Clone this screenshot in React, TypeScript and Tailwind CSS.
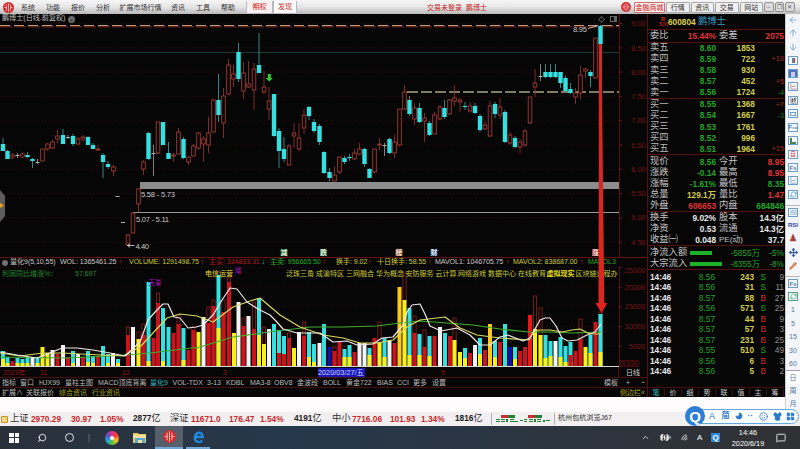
import {
  ArrowDown,
  ArrowLeft,
  ArrowUp,
  BatteryCharging,
  ChartCandlestick,
  ChartLine,
  ChevronUp,
  LayoutGrid,
  MessageSquare,
  Moon,
  Move,
  Pencil,
  RefreshCw,
  Search,
  Shirt,
  Smile,
  Waves,
  Wifi,
} from "lucide-react";
import { clsx } from "clsx";

// x, high, low, body top, body bottom, kind (u = up, d = down, c = grey cross)
type Candle = [number, number, number, number, number, "u" | "d" | "c"];

const candles: Candle[] = [
  [3, 138, 151, 144, 151, "d"],
  [7.5, 150, 159, 151, 159, "d"],
  [12.5, 153, 159, 155, 157, "u"],
  [17.5, 153, 158, 155, 156, "c"],
  [22.5, 153, 158, 154, 157, "u"],
  [27.5, 152, 158, 155, 157, "d"],
  [32.5, 158, 168, 159, 161, "d"],
  [37.5, 159, 164, 162, 163, "c"],
  [42.5, 149, 161, 149, 161, "u"],
  [47.5, 143, 151, 144, 149, "u"],
  [52.5, 140, 149, 142, 148, "u"],
  [57.5, 130, 143, 136, 139, "u"],
  [63, 129, 144, 135, 144, "d"],
  [68, 135, 139, 137, 138, "c"],
  [73, 134, 146, 136, 144, "d"],
  [78, 137, 145, 139, 144, "u"],
  [83, 135, 142, 137, 139, "u"],
  [88, 136, 145, 137, 145, "d"],
  [93, 143, 149, 145, 149, "d"],
  [98, 145, 151, 149, 150, "u"],
  [103, 153, 178, 155, 162, "d"],
  [108, 161, 169, 164, 167, "d"],
  [113.5, 165, 176, 167, 171, "u"],
  [117.5, 196, 197, 196, 197, "c"],
  [123, 222, 223, 222, 223, "c"],
  [128, 234, 246, 235, 245, "u"],
  [133, 213, 233, 213, 233, "u"],
  [138.5, 188, 212, 189, 204, "u"],
  [143.5, 160, 175, 162, 169, "u"],
  [148.5, 132, 160, 133, 159, "d"],
  [153.5, 145, 176, 153, 154, "c"],
  [158, 122, 154, 122, 153, "u"],
  [163, 122, 145, 122, 145, "d"],
  [168.5, 142, 159, 153, 159, "d"],
  [173.5, 153, 162, 155, 156, "u"],
  [178.5, 128, 154, 132, 154, "u"],
  [183.5, 137, 159, 139, 158, "d"],
  [188.5, 156, 165, 157, 162, "u"],
  [193.5, 144, 156, 146, 156, "u"],
  [198.5, 132, 150, 133, 148, "u"],
  [203.5, 136, 162, 139, 144, "u"],
  [208.5, 117, 153, 133, 145, "u"],
  [213.5, 99, 132, 100, 132, "u"],
  [218.5, 74, 122, 100, 115, "d"],
  [223.5, 88, 138, 96, 123, "u"],
  [228.5, 59, 95, 65, 94, "u"],
  [233.5, 65, 87, 74, 79, "u"],
  [238.5, 43, 82, 52, 79, "d"],
  [243.5, 62, 99, 73, 91, "u"],
  [248.5, 61, 88, 84, 87, "u"],
  [254, 63, 110, 69, 90, "u"],
  [259, 33, 73, 65, 73, "d"],
  [264, 71, 94, 87, 92, "u"],
  [269, 87, 120, 101, 109, "u"],
  [274, 94, 137, 94, 136, "d"],
  [279, 128, 168, 131, 151, "d"],
  [284, 137, 162, 149, 159, "d"],
  [289, 144, 165, 146, 165, "u"],
  [294, 123, 148, 133, 136, "u"],
  [299, 123, 151, 138, 149, "u"],
  [304, 109, 134, 115, 128, "u"],
  [309, 106, 120, 107, 116, "d"],
  [314, 119, 133, 122, 131, "d"],
  [319.5, 124, 145, 126, 142, "d"],
  [324, 151, 174, 152, 173, "d"],
  [329.5, 168, 181, 172, 178, "d"],
  [334.5, 167, 181, 175, 181, "u"],
  [339.5, 157, 174, 157, 172, "u"],
  [344.5, 156, 164, 158, 162, "d"],
  [349.5, 154, 161, 157, 158, "d"],
  [354.5, 149, 160, 153, 159, "u"],
  [359.5, 143, 155, 149, 154, "u"],
  [364.5, 148, 167, 149, 164, "d"],
  [369.5, 168, 178, 169, 178, "d"],
  [374.5, 149, 173, 149, 172, "u"],
  [379.5, 138, 150, 144, 145, "u"],
  [384.5, 143, 156, 145, 146, "c"],
  [389.5, 138, 154, 139, 153, "d"],
  [394.5, 135, 158, 142, 153, "u"],
  [399.5, 109, 146, 109, 145, "u"],
  [404.5, 85, 110, 92, 109, "u"],
  [409.5, 96, 116, 100, 114, "d"],
  [414.5, 103, 125, 108, 119, "u"],
  [419.5, 103, 123, 108, 122, "d"],
  [424.5, 113, 142, 118, 121, "u"],
  [429.5, 121, 136, 123, 135, "d"],
  [434.5, 112, 134, 115, 134, "u"],
  [440, 105, 120, 107, 119, "u"],
  [444.5, 100, 119, 108, 117, "d"],
  [449.5, 99, 115, 100, 114, "u"],
  [454.5, 85, 106, 98, 101, "u"],
  [460, 98, 112, 100, 102, "u"],
  [465, 102, 110, 106, 107, "d"],
  [470, 102, 113, 106, 111, "u"],
  [475, 103, 114, 106, 113, "d"],
  [480, 114, 132, 116, 130, "d"],
  [485, 121, 130, 125, 129, "u"],
  [490, 101, 137, 106, 136, "u"],
  [495, 102, 118, 104, 114, "d"],
  [500, 98, 119, 107, 115, "u"],
  [505, 110, 143, 112, 142, "d"],
  [510, 132, 145, 135, 143, "u"],
  [515, 136, 148, 138, 147, "d"],
  [520, 139, 153, 142, 147, "u"],
  [525, 129, 147, 131, 145, "u"],
  [530, 97, 124, 97, 123, "u"],
  [535, 69, 97, 83, 87, "u"],
  [540.5, 64, 81, 76, 77, "c"],
  [545.5, 64, 78, 72, 77, "d"],
  [550.5, 64, 78, 72, 77, "d"],
  [555.5, 64, 78, 72, 77, "d"],
  [560.5, 72, 88, 72, 83, "d"],
  [565.5, 76, 93, 78, 91, "d"],
  [570.5, 83, 94, 89, 93, "d"],
  [575.5, 88, 104, 93, 97, "u"],
  [580.5, 66, 99, 75, 93, "u"],
  [585.5, 68, 78, 69, 71, "u"],
  [590.5, 70, 87, 72, 76, "d"],
  [595.5, 38, 79, 38, 78, "u"],
  [600.5, 25, 55, 26, 44, "d"],
];

const C = "#35e0e0";
const R = "#c8141a";
const Y = "#f6f01e";
const W = "#f4f4f4";
const B = "#1212a0";

// x, top, colour, top of the yellow part, top of the hollow part
type Bar = [number, number, string, number?, number?];

const bars: Bar[] = [
  [3, 351, C, 359],
  [7.5, 357, C, 363],
  [12.5, 361, R],
  [17.5, 358, C, 363],
  [22.5, 359, C, 363],
  [27.5, 357, C, 363],
  [32.5, 357, W],
  [37.5, 357, C, 363],
  [42.5, 347, Y],
  [47.5, 353, Y],
  [52.5, 350, W],
  [57.5, 354, R],
  [63, 345, W],
  [68, 357, R],
  [73, 351, C, 363],
  [78, 354, W],
  [83, 357, R],
  [88, 351, C, 362],
  [93, 356, C, 363],
  [98, 356, R],
  [103, 346, C],
  [108, 354, C, 363],
  [113, 353, W],
  [118, 359, C, 363],
  [128, 335, R, undefined, 327],
  [133, 327, W],
  [138.5, 339, Y, undefined, 332],
  [143.5, 335, R, undefined, 324],
  [148.5, 282, C, 361],
  [153.5, 338, R],
  [158, 303, R, undefined, 293],
  [163, 308, C, 361],
  [168.5, 327, C],
  [173.5, 333, R],
  [178.5, 324, R, undefined, 315],
  [183.5, 328, C, 360],
  [188.5, 350, R],
  [193.5, 330, R, undefined, 327],
  [198.5, 332, Y],
  [203.5, 317, W],
  [208.5, 323, R, undefined, 307],
  [213.5, 306, R, undefined, 300],
  [218.5, 275, C, 328],
  [223.5, 312, R, undefined, 300],
  [229, 282, R, undefined, 278],
  [234, 333, Y],
  [238.5, 302, W],
  [243.5, 326, R, undefined, 318],
  [248.5, 316, W],
  [254, 329, R, undefined, 302],
  [259, 298, C, 335],
  [264, 344, Y, undefined, 327],
  [269, 329, W],
  [274, 324, C],
  [279, 330, C],
  [284, 336, C],
  [289, 338, R, undefined, 333],
  [294, 348, Y],
  [299, 332, W],
  [304, 336, R, undefined, 322],
  [309, 332, C, 357],
  [314, 344, C, 362],
  [319.5, 343, W],
  [324, 324, C],
  [329.5, 347, B],
  [334.5, 351, R, undefined, 347],
  [339.5, 342, R],
  [344.5, 349, C, 357],
  [349.5, 345, C, 357],
  [354.5, 352, R],
  [359.5, 343, W],
  [364.5, 343, W],
  [369.5, 348, C, 355],
  [374.5, 338, R],
  [379.5, 342, Y, undefined, 322],
  [384.5, 338, C, 357],
  [389.5, 340, W],
  [394.5, 343, R],
  [399.5, 287, "#fbc81c"],
  [404.5, 300, Y, undefined, 273],
  [409.5, 308, C, 355],
  [414.5, 333, R, undefined, 316],
  [419.5, 334, C, 355],
  [424.5, 347, R, undefined, 330],
  [429.5, 336, C, 356],
  [434.5, 336, R],
  [440, 327, W],
  [445, 333, C],
  [450, 336, R],
  [454.5, 340, Y, undefined, 318],
  [460, 352, Y],
  [465, 348, C, 358],
  [470, 353, R],
  [475, 345, W],
  [480, 338, C, 354],
  [485, 350, R],
  [490, 324, "#fbc81c"],
  [495, 341, C, 357],
  [500, 342, R],
  [505, 324, C],
  [510, 347, B],
  [515, 347, C, 359],
  [520, 351, R],
  [525, 347, R],
  [530, 315, "#ee1515"],
  [535, 329, Y, undefined, 296],
  [540.5, 335, Y, undefined, 308],
  [545.5, 335, C, 358],
  [550.5, 341, C, 356],
  [555.5, 341, W],
  [560.5, 337, C, 357],
  [565.5, 346, C, 362],
  [570.5, 342, C, 362],
  [575.5, 351, R],
  [580.5, 339, R, undefined, 319],
  [585.5, 347, Y],
  [590.5, 335, C, 353],
  [595.5, 322, R],
  [600.5, 314, C, 352, 312],
];

const whiteLine =
  "0,352 17,355 37,358 50,353 62,348 77,348 93,350 110,353 125,356 140,342 148,320 156,311 163,304 168,304 174,317 180,318 188,328 196,327 203,325 213,315 222,300 230,288 237,289 247,302 258,309 270,315 276,321 283,329 297,333 320,333 333,342 347,341 357,345 373,344 382,338 393,337 403,325 407,312 412,305 420,304 425,314 430,326 441,331 457,328 470,335 480,345 490,345 500,337 508,335 523,341 530,338 540,320 545,318 550,318 556,326 562,338 568,341 577,340 587,335 595,332 601,324";
const yellowLine =
  "0,353 20,356 43,353 63,353 80,354 123,356 140,347 153,333 167,318 180,314 197,316 213,322 233,307 250,301 260,298 280,315 300,327 323,335 343,338 360,343 377,343 393,340 407,327 420,320 445,317 460,328 477,335 500,338 529,340 534,331 540,330 550,330 562,332 572,330 580,329 590,334 601,334";
const greenLine =
  "0,357 67,358 127,355 150,353 200,347 233,337 269,332 310,327 343,327 377,326 400,323 420,321 447,323 473,325 500,329 529,332 550,332 573,333 601,332";

const upperAxis = ["9.00", "8.50", "8.00", "7.50", "7.00", "6.50", "6.00", "5.50", "5.00", "4.50"];
const lowerAxis = ["25000", "20000", "15000", "10000", "5000"];

const fills = { u: "#0a0808", d: "#35e0e0", c: "#b0b0b0" };
const wicks = { u: "#983832", d: "#3aa8a8", c: "#a0a0a0" };

function PriceChart() {
  return (
    <svg width="648" height="233" viewBox="0 24 648 233" className="block overflow-visible">
      {upperAxis.map((t, i) => (
        <g key={t}>
          <line x1="0" x2="619" y1={23.5 + i * 24.3} y2={23.5 + i * 24.3} stroke="#2a0a0a" strokeDasharray="1 2" />
          <line x1="619" x2="622" y1={23.5 + i * 24.3} y2={23.5 + i * 24.3} stroke="#7a1212" />
          <text x="645.5" y={26.3 + i * 24.25} textAnchor="end" fontSize="7.3" fill="#7c1214">{t}</text>
        </g>
      ))}
      <line x1="0" x2="619" y1="25.5" y2="25.5" stroke="#b9a07a" strokeWidth="1.2" strokeDasharray="10 4" />
      <line x1="0" x2="619" y1="26.8" y2="26.8" stroke="#8c2a24" strokeWidth="1" strokeDasharray="12 2" />
      <line x1="0" x2="619" y1="52.5" y2="52.5" stroke="#1d3838" />
      <line x1="407" x2="619" y1="92" y2="92" stroke="#aaa184" strokeWidth="1.3" strokeDasharray="11 3" />
      <rect x="140" y="182" width="479" height="7" fill="#8c8c8c" />
      <line x1="133" x2="619" y1="212.5" y2="212.5" stroke="#989898" />
      {candles.map(([x, h, l, t, b, k]) => (
        <g key={x}>
          <line x1={x} x2={x} y1={h} y2={l} stroke={wicks[k]} strokeWidth="0.8" />
          {k === "u" && <rect x={x - 1.8} y={t} width="3.6" height={Math.max(b - t, 1)} fill={fills.u} stroke="#b0403a" strokeWidth="0.8" />}
          {k === "d" && <rect x={x - 2.2} y={t} width="4.4" height={Math.max(b - t, 1)} fill={fills.d} />}
          {k === "c" && <rect x={x - 2} y={t} width="4" height="1" fill={fills.c} />}
        </g>
      ))}
      <path d="M267.8 74h3v4h2l-3.5 3.5L265.8 78h2z" fill="#2fd02f" />
      <g fill="#c8c8c8" fontSize="7.6">
        <text x="141" y="197.2" textLength="34">5.58 - 5.73</text>
        <text x="136" y="222" textLength="33">5.07 - 5.11</text>
        <text x="135.5" y="249" textLength="13.5">4.40</text>
        <text x="573" y="32" textLength="14">8.95</text>
      </g>
      <path d="M127.5 245.5h7M130 243.5l-2.5 2l2.5 2M588 28.5l9-2.5" stroke="#e0e0e0" strokeWidth="0.8" fill="none" />
      <path d="M0 190l5 6v20l-5 6z" fill="#5c5c5c" />
      <path d="M0 203l4 2.5l-4 2.5z" fill="#e8a020" />
      <line x1="619.5" x2="619.5" y1="14" y2="257" stroke="#5a1010" />
      <g fontSize="6.5" fontWeight="bold">
        {[
          ["减", 280.5, "#1f6b2c"],
          ["跌", 320, "#1f6b2c"],
          ["榜", 395.5, "#9a4a20"],
          ["财", 430.5, "#1c4f8c"],
          ["涨", 592, "#a01818"],
        ].map(([t, x, c]) => (
          <g key={t}>
            <rect x={x} y="249" width="7" height="7" fill={c as string} />
            <text x={Number(x) + 0.3} y="255" fill="#f0f0e8">{t}</text>
          </g>
        ))}
      </g>
    </svg>
  );
}

function VolumeChart() {
  return (
    <svg width="648" height="100" viewBox="0 267 648 100" className="block">
      {lowerAxis.map((t, i) => (
        <g key={t}>
          <line x1="0" x2="619" y1={267.5 + i * 19.7} y2={267.5 + i * 19.7} stroke="#2a0a0a" strokeDasharray="1 2" />
          <line x1="619" x2="622" y1={267.5 + i * 19.7} y2={267.5 + i * 19.7} stroke="#7a1212" />
          <text x="645.5" y={(i ? 269.8 : 273) + i * 19.7} textAnchor="end" fontSize="7.5" fill="#7c1214">{t}</text>
        </g>
      ))}
      <rect x="620.5" y="360.5" width="18" height="6" fill="none" stroke="#701012" strokeWidth="0.6" />
      <text x="621.5" y="366" fontSize="6.8" fill="#7c1214">X100</text>
      {bars.map(([x, top, color, yellow, hollow]) => (
        <g key={x}>
          {hollow && <rect x={x - 1.6} y={hollow} width="3.2" height={366 - hollow} fill="none" stroke="#8c2420" strokeWidth="0.8" />}
          <rect x={x - 2} y={top} width="4" height={366 - top} fill={color} />
          {yellow && <rect x={x - 2} y={yellow} width="4" height={366 - yellow} fill={Y} />}
        </g>
      ))}
      {/* sell part of a few falling days */}
      <path d="M277 353h4v13h-4zM282 354h4v12h-4zM568.5 355h4v11h-4z" fill={R} />
      <line x1="0" x2="619" y1="366.5" y2="366.5" stroke="#d8d8d0" />
      <g fill="none" strokeWidth="1.2" strokeLinejoin="round">
        <polyline points={greenLine} stroke="#3fae2c" />
        <polyline points={yellowLine} stroke="#d8d860" />
        <polyline points={whiteLine} stroke="#f0e8e8" />
      </g>
      <g fill="#b018c8" fontSize="6.5">
        <text x="148.5" y="285">天量</text>
        <text x="235" y="273">增</text>
      </g>
      <line x1="619.5" x2="619.5" y1="267" y2="367" stroke="#5a1010" />
    </svg>
  );
}

type Slot = [string, string];

function Slots({ items }: { items: Slot[] }) {
  return (
    <>
      {items.map(([text, cls], i) => (
        <span key={i} className={clsx("shrink-0 whitespace-pre", cls)}>
          {text}
        </span>
      ))}
    </>
  );
}

const menu: Slot[] = [
  ["系统", "w-[25px]"],
  ["功能", "w-[25px]"],
  ["报价", "w-[25px]"],
  ["分析", "w-[23.5px]"],
  ["扩展市场行情", "w-[51.5px]"],
  ["资讯", "w-[25px]"],
  ["工具", "w-[25px]"],
  ["帮助", "w-[24px]"],
];

const indicatorRow: Slot[] = [
  ["量化9(5,10,55)", "w-[50px]"],
  ["WOL: 1365461.25", "w-[59px]"],
  ["↑", "w-[10px] text-[#d03030]"],
  ["VOLUME: 1291498.75", "w-[71.5px]"+" text-[#c8c840]"],
  ["↑", "w-[8.5px] text-[#d03030]"],
  ["主买: 334833.31", "w-[52.5px] text-[#b01414]"],
  ["↓", "w-[8.5px] text-[#40c0c0]"],
  ["主卖: 956665.50", "w-[52.5px] text-[#22a822]"],
  ["↑", "w-[13.5px] text-[#d03030]"],
  ["换手: 9.02", "w-[32px] text-[#c8c840]"],
  ["↑", "w-[9px] text-[#d03030]"],
  ["十日换手: 58.55", "w-[51px] text-[#c8c840]"],
  ["↑", "w-[7px] text-[#d03030]"],
  ["MAVOL1: 1046705.75", "w-[71px]"],
  ["↑", "w-[7px] text-[#d03030]"],
  ["MAVOL2: 838687.00", "w-[67px] text-[#c8c840]"],
  ["↑", "w-[8px] text-[#d03030]"],
  ["MAVOL3", "text-[#22a822]"],
];

const formulas: Slot[] = [
  ["指标", "w-[18px]"],
  ["窗口", "w-[19px]"],
  ["HJX99", "w-[26px]"],
  ["量柱主图", "w-[33px]"],
  ["MACD顶底背离", "w-[52px]"],
  ["量化9", "w-[22.5px] text-[#30b8c0]"],
  ["VOL-TDX", "w-[34.5px]"],
  ["3-13", "w-[19px]"],
  ["KDBL", "w-[24px]"],
  ["MA3-8", "w-[24px]"],
  ["OBV8", "w-[23px]"],
  ["金波段", "w-[26px]"],
  ["BOLL", "w-[23px]"],
  ["黄金722", "w-[31px]"],
  ["BIAS", "w-[20px]"],
  ["CCI", "w-[16px]"],
  ["更多", "w-[19px]"],
  ["设置", "w-[172px]"],
  ["模板", "w-[22px]"],
  ["+", "w-[15px]"],
  ["−", ""],
];

const concepts: Slot[] = [
  ["泛珠三角", "w-[30px]"],
  ["成渝特区", "w-[30px]"],
  ["三网融合", "w-[30px]"],
  ["华为概念", "w-[29.5px]"],
  ["安防服务", "w-[30px]"],
  ["云计算", "w-[22.5px]"],
  ["网络游戏", "w-[30px]"],
  ["数据中心", "w-[30px]"],
  ["在线教育", "w-[28.5px]"],
  ["虚拟现实", "w-[29px] font-bold text-[#e8e020]"],
  ["区块链", "w-[21px]"],
  ["远程办", ""],
];

function ChartPanel() {
  return (
    <section className="relative flex w-[648px] shrink-0 flex-col border-r border-[#5a1010]">
      <header className="flex h-[10px] items-center pl-[2px] text-[7.1px] text-[#c0c0c0]">
        <span className="w-[66px] whitespace-nowrap">鹏博士(日线.前复权)</span>
        <span className="flex size-[7px] items-center justify-center rounded-full bg-[#6a6a6a] text-[6px] text-black">⌄</span>
        <span className="ml-[524px] size-[5px] rotate-45 border border-[#555]" />
        <span className="ml-[6px] h-[6px] w-[7px] border border-r-[3px] border-[#666]" />
      </header>
      <PriceChart />
      <div className="flex h-[10px] items-center overflow-hidden border-t border-[#6a1212] pl-[2px] text-[7.1px] tracking-[-0.08px] text-[#c8c8c8]">
        <span className="mr-[2px] size-[6px] shrink-0 rounded-full bg-[#707070]" />
        <Slots items={indicatorRow} />
      </div>
      <VolumeChart />
      <div className="flex h-[10px] items-center text-[7px] text-[#8c1414]">
        <span className="w-[40px] pl-[3px]">2019年</span>
        <span className="w-[82px]">11</span>
        <span className="w-[101px]">12</span>
        <span className="w-[95px]">3</span>
        <span className="w-[47px] bg-[#1818b8] text-[7.3px] leading-[9px] whitespace-nowrap text-[#d0d8ff]">2020/03/27/五</span>
        <span className="w-[76px]" />
        <span className="w-[177px]">5</span>
        <span className="flex h-full flex-1 items-center justify-center border-l border-[#5a1010] text-[#d0d0d0]">日线</span>
      </div>
      <div className="flex h-[11px] items-center border-y border-[#4a1010] pl-[2px] text-[7px] text-[#b8b8b8]">
        <Slots items={formulas} />
      </div>
      <div className="flex h-[9px] items-center pl-[2px] text-[7px] text-[#b8b8b8]">
        <span className="w-[24px]">扩展∧</span>
        <span className="w-[33px]">关联报价</span>
        <span className="w-[33px] text-[#a0a028]">综合资讯</span>
        <span className="w-[528px] text-[#a0a028]">行业资讯</span>
        <span className="whitespace-nowrap text-[#a8a020]">侧边栏«</span>
      </div>

      {/* labels drawn over the volume bars */}
      <div className="absolute top-[254px] left-0 flex h-[10px] w-[618px] items-center overflow-hidden pl-[2px] text-[7px] text-[#c8c83c]">
        <span className="w-[73px] shrink-0 text-[#1f8c2c]">利润同比增涨%：</span>
        <span className="w-[130px] shrink-0 text-[#1f8c2c]">57.697</span>
        <span className="w-[81px] shrink-0 text-[#e8d840]">电信运营</span>
        <Slots items={concepts} />
      </div>
      <svg className="absolute top-0 left-0" width="618" height="300" viewBox="0 14 618 300">
        <path d="M599.5 44h2l2.8 259h3l-5.8 10l-6-10h3z" fill="#e3241c" />
        <path d="M598.8 44h3.2v260h-3.2z" fill="#d42a24" />
      </svg>
    </section>
  );
}

const green = "text-[#22a428]";
const red = "text-[#e03434]";
const yellow = "text-[#d0cc50]";
const white = "text-[#e8e8e8]";

const book = [
  ["卖五", "8.60", "1853", ""],
  ["卖四", "8.59", "722", "+10"],
  ["卖三", "8.58", "930", ""],
  ["卖二", "8.57", "452", "+5"],
  ["卖一", "8.56", "1724", "-4"],
  ["买一", "8.55", "1368", "+7"],
  ["买二", "8.54", "1667", "-3"],
  ["买三", "8.53", "1761", ""],
  ["买四", "8.52", "996", ""],
  ["买五", "8.51", "1964", "+15"],
];

const quote = [
  ["现价", "8.56", green, "今开", "8.95", red],
  ["涨跌", "-0.14", green, "最高", "8.95", red],
  ["涨幅", "-1.61%", green, "最低", "8.35", green],
  ["总量", "129.1万", yellow, "量比", "1.47", red],
  ["外盘", "606653", red, "内盘", "684846", green],
];

const finance = [
  ["换手", "9.02%", white, "股本", "14.3亿", white],
  ["净资", "0.53", white, "流通", "14.3亿", white],
  ["收益㈠", "0.048", white, "PE(动)", "37.7", white],
];

const ticks = [
  ["8.56", "243", "S", "9"],
  ["8.56", "31", "S", "11"],
  ["8.57", "88", "B", "27"],
  ["8.56", "571", "S", "25"],
  ["8.57", "44", "B", "9"],
  ["8.57", "57", "B", "3"],
  ["8.57", "231", "B", "25"],
  ["8.55", "510", "S", "49"],
  ["8.56", "6", "B", "3"],
  ["8.56", "5", "B", "2"],
];

function BookRow({ row }: { row: string[] }) {
  const [label, price, size, diff] = row;
  return (
    <div className="flex h-[11.1px] items-center leading-none">
      <span className="w-[26px] text-[9.3px] text-[#b8b8b8]">{label}</span>
      <span className={clsx("w-[40px] text-right font-bold", green)}>{price}</span>
      <span className={clsx("w-[39px] text-right font-bold", yellow)}>{size}</span>
      <span className={clsx("flex-1 text-right text-[7.3px]", diff.startsWith("-") ? "text-[#1c7a20]" : "text-[#a02828]")}>{diff}</span>
    </div>
  );
}

function PairRow({ row }: { row: string[] }) {
  const [a, av, ac, b, bv, bc] = row;
  return (
    <div className="flex h-[11px] items-center leading-none whitespace-nowrap">
      <span className="w-[26px] text-[9.3px] text-[#c4c4c4]">{a}</span>
      <span className={clsx("w-[40px] text-right font-bold", ac)}>{av}</span>
      <span className={clsx("ml-[3px] w-[22px] text-[#c4c4c4]", b.startsWith("PE") ? "text-[8px]" : "text-[9.3px]")}>{b}</span>
      <span className={clsx("flex-1 text-right font-bold", bc)}>{bv}</span>
    </div>
  );
}

function QuotePanel() {
  return (
    <section className="flex w-[137px] shrink-0 flex-col pr-[1px] text-[8.3px]">
      <div className="flex h-[16px] items-center border-b border-[#5a1010] pt-[1px] pl-[11px] leading-none">
        <span className="flex w-[8px] flex-col text-[5.5px] leading-[5.5px] text-[#d02828]">
          <b className="text-center">R</b>
          <span>500</span>
        </span>
        <b className="ml-[1px] w-[30px] text-[#dccf50]">600804</b>
        <span className="text-[9.3px] text-[#3a9cc8]">鹏博士</span>
      </div>
      <div className="flex h-[12.5px] items-center border-b border-[#5a1010] pl-[2px] leading-none">
        <span className="w-[26px] text-[9.3px] text-[#c4c4c4]">委比</span>
        <b className="w-[40px] text-right text-[#e03434]">15.44%</b>
        <span className="ml-[3px] text-[9.3px] text-[#c4c4c4]">委差</span>
        <b className="flex-1 text-right text-[#e03434]">2075</b>
      </div>
      <div className="border-b border-[#5a1010] pl-[2px]">
        {book.slice(0, 5).map((r) => <BookRow key={r[0]} row={r} />)}
      </div>
      <div className="border-b border-[#5a1010] pl-[2px]">
        {book.slice(5).map((r) => <BookRow key={r[0]} row={r} />)}
      </div>
      <div className="border-b border-[#5a1010] pt-[1px] pl-[2px]">
        {quote.map((r) => <PairRow key={r[0]} row={r} />)}
      </div>
      <div className="border-b border-[#5a1010] pl-[2px]">
        {finance.map((r) => <PairRow key={r[0]} row={r} />)}
      </div>
      <div className="border-b border-[#5a1010] pt-[1px] pl-[2px]">
        {[
          ["净流入额", "w-[22px]", "-5855万", "-5%"],
          ["大宗流入", "w-[32px]", "-8355万", "-8%"],
        ].map(([label, w, v, p]) => (
          <div key={label} className="flex h-[11px] items-center leading-none">
            <span className="w-[40px] text-[9.3px] whitespace-nowrap text-[#c4c4c4]">{label}</span>
            <span className="w-[32px]">
              <i className={clsx("block h-[4px] bg-[#1fb02a]", w)} />
            </span>
            <span className="w-[38px] text-right whitespace-nowrap text-[#22a428]">{v}</span>
            <b className="flex-1 text-right font-normal text-[#22a428]">{p}</b>
          </div>
        ))}
      </div>
      <div className="flex-1 pt-[1px] pl-[2px]">
        {ticks.map(([price, n, side, c], i) => (
          <div key={i} className="flex h-[10.55px] items-center leading-none">
            <b className="w-[24px] text-[#e8e8e8]">14:46</b>
            <span className="w-[41px] text-right text-[#22a428]">{price}</span>
            <b className={clsx("w-[39px] text-right font-bold", yellow)}>{n}</b>
            <span className={clsx("w-[12px] text-right", side === "S" ? "text-[#22a428]" : "text-[#d03030]")}>{side}</span>
            <span className="flex-1 text-right text-[#909090]">{c}</span>
          </div>
        ))}
      </div>
      <div className="flex h-[10px] items-center border-t border-[#4a1010] text-[7px] text-[#c8c8c8]">
        {["笔", "价", "细", "势", "联", "值", "主", "筹"].map((t) => (
          <span key={t} className={clsx("flex-1 border-r border-[#3a1010] text-center", t === "笔" && "text-[#30c0c0]")}>{t}</span>
        ))}
      </div>
    </section>
  );
}

const box = "flex h-[9px] w-[10px] items-center justify-center border border-[#6c9cc8] bg-[#f4f9fd]";

function ToolStrip() {
  return (
    <aside className="flex w-[15px] shrink-0 flex-col items-center border-l border-[#c8d0d8] bg-[#f3f5f8] text-[7px] leading-none text-[#5078a0] *:flex *:h-[13.45px] *:shrink-0 *:items-center *:justify-center">
      <div className="-mt-[1px]"><ArrowLeft size={10} color="#6ca4d8" /></div>
      <div><ArrowUp size={10} color="#6ca4d8" /></div>
      <div><ArrowDown size={10} color="#6ca4d8" /></div>
      <div><span className={box}><span className="h-[5px] w-[3px] border-r border-[#c04040] bg-[#7080a0]" /></span></div>
      <div><span className={box}><span className="h-[7px] w-[8px] border-x-2 border-t-2 border-[#5070c0] bg-[#c8c8e8]" /></span></div>
      <div><span className={box}><ChartLine size={7} color="#b05050" /></span></div>
      <div><span className={box}><ChartCandlestick size={7} color="#403030" /></span></div>
      <div><span className={box}><span className="h-[4px] w-[6px] border border-[#6c9cc8]" /></span></div>
      <div><span className={clsx(box, "text-[6px] font-bold")}>F₁₀</span></div>
      <div><span className={box}><span className="h-[6px] w-[6px] border-b-2 border-l-2 border-[#508050]" /></span></div>
      <div><span className={clsx(box, "text-[6px] text-[#d03838]")}>自</span></div>
      <div><span className={clsx(box, "text-[6px] font-bold")}>Fs</span></div>
      <div><span className={box}><ChartLine size={7} /></span></div>
      <div><span className={box}><RefreshCw size={7} color="#3890c0" /></span></div>
      <div className="mt-[4px] w-full border-t border-[#b8b8b8]"><span className={box}><Waves size={7} /></span></div>
      <div className="text-[6px] font-bold text-[#3040b0]">RSI</div>
      <div className="text-[9px] font-bold text-[#a84038]">♟</div>
      <div><Move size={9} color="#3860a0" strokeWidth={3} /></div>
      <div><Pencil size={8} color="#c07040" fill="#d89060" /></div>
      <div className="mt-[4px] w-full border-t border-[#b8b8b8]"><span className={clsx(box, "text-[6px] font-bold")}>Fs</span></div>
      <div><span className={clsx(box, "border-[#58a080]")}><RefreshCw size={7} color="#38a060" /></span></div>
      <div>1</div>
      <div>5</div>
      <div>15</div>
      <div>30</div>
      <div>60</div>
      <div className="w-full border-t border-[#a0a0b0] bg-white">日</div>
      <div>周</div>
      <div>月</div>
    </aside>
  );
}

const Emblem = ({ className }: { className?: string }) => (
  <svg viewBox="0 0 12 12" className={className}>
    <circle cx="6" cy="6" r="6" fill="#d32a2e" />
    <path d="M6 1v10M3.8 2.5v7M8.2 2.5v7M1.5 6h2.3M8.2 6h2.3" stroke="#f3c4c4" strokeWidth="0.9" />
  </svg>
);

function MenuBar() {
  return (
    <header className="flex h-[14px] shrink-0 items-center bg-linear-to-b from-[#f6f6f6] via-[#e6e6e6] to-[#b8b8b8] text-[7px] leading-none text-[#303030]">
      <Emblem className="mr-[7px] ml-[3px] size-[11px]" />
      <Slots items={menu} />
      <span className="ml-[1px] flex h-[13px] w-[27px] items-center justify-center border border-t-0 border-[#b8b8c0] bg-[#f8f0f0] text-[#d82020]">期权</span>
      <span className="flex h-[13px] w-[24px] items-center justify-center border border-t-0 border-[#b8b8c0] bg-[#fafafa] text-[#c83030]">发现</span>
      <span className="ml-[130px] w-[194px] whitespace-nowrap text-[#c42828]">交易未登录&nbsp; 鹏博士</span>
      <Emblem className="mr-[3px] size-[10px] shrink-0" />
      <span className="flex h-[11px] w-[31px] shrink-0 items-center justify-center rounded-[1px] border border-[#c87070] bg-[#faf0f0] text-[#d01818]">金融商城</span>
      {["行情", "资讯", "交易", "网站"].map((t) => (
        <span key={t} className="ml-[1px] flex h-[11px] w-[23.5px] shrink-0 items-center justify-center rounded-[1px] border border-[#a8a8a8] bg-[#f0f0f0]">{t}</span>
      ))}
      <span className="ml-[1px] flex gap-[1px] text-[#606060]">
        {["–", "❐", "✕"].map((t) => (
          <span key={t} className="flex size-[9.5px] items-center justify-center rounded-[2px] border border-[#909090] bg-[#dcdcdc] text-[6px]">{t}</span>
        ))}
      </span>
    </header>
  );
}

const indices = [
  ["上证", "w-[21px]", "2970.29", "w-[40px]", "30.97", "w-[29px]", "1.05%", "w-[33px]", "2877", "亿", "w-[37px]"],
  ["深证", "w-[21px]", "11671.0", "w-[38px]", "176.47", "w-[31px]", "1.54%", "w-[34px]", "4191", "亿", "w-[38px]"],
  ["中小", "w-[20px]", "7716.06", "w-[38px]", "101.93", "w-[31px]", "1.34%", "w-[34px]", "1816", "亿", "w-[36px]"],
];

function IndexBar() {
  return (
    <div className="flex h-[14px] shrink-0 items-center bg-[#f1efef] text-[8.3px] leading-none text-[#c8282c]">
      <span className="mr-[2px] ml-[1px] flex size-[7px] items-center justify-center rounded-[1px] border border-[#c89020] bg-[#f0c850] text-[5px] text-white">▤</span>
      {indices.map(([name, nw, v, vw, d, dw, p, pw, amt, unit, aw]) => (
        <div key={name} className="flex items-center whitespace-nowrap">
          <span className={clsx("text-[9.3px] text-[#303030]", nw)}>{name}</span>
          <b className={vw}>{v}</b>
          <b className={dw}>{d}</b>
          <b className={pw}>{p}</b>
          <b className={clsx("text-[#202020]", aw)}>
            {amt}
            <span className="text-[9px] font-normal">{unit}</span>
          </b>
        </div>
      ))}
      <span className="h-[12px] w-[4px] border-l border-[#b0b0b0]" />
      <svg width="58" height="10" viewBox="0 0 58 10" className="ml-[1px]">
        <path d="M5 1h7v3H5zM32 1h7v3h-7z" fill="#c83030" />
        <path d="M12 1h7v3h-7zM39 1h7v3h-7z" fill="#208030" />
        <path d="M0 5h4v1H0zM5 5h4v1H5zM14 5h4v1h-4zM0 7h4v1H0zM5 7h4v1H5zM14 7h8v1h-8zM28 5h3v1h-3zM33 5h4v1h-4zM41 5h4v1h-4zM28 7h3v1h-3zM33 7h4v1h-4zM41 7h4v1h-4zM10 5h2v3h-2zM24 6h3v1h-3zM38 5h2v3h-2zM47 6h2v2h-2zM50 6h4v1h-4z" fill="#208030" />
      </svg>
      <span className="flex h-[12px] items-center border-l border-[#b0b0b0] pl-[3px] text-[7.1px] whitespace-nowrap text-[#303030]">杭州包杭浏览J67</span>
    </div>
  );
}

function ImeBar() {
  return (
    <div className="absolute top-[406px] left-[685px] flex h-[20px] w-[114px] items-center">
      <div className="ml-[10px] flex h-[15px] flex-1 items-center gap-[4.5px] rounded-r-[8px] border border-[#60a8e0] bg-[#fbfdff] pl-[13px] text-[#2878c8]">
        <span className="w-[8px] text-[9px]">A</span>
        <span className="w-[9px] text-[8px] font-bold">简</span>
        <Moon size={8} fill="#2878c8" className="shrink-0 -scale-x-100" />
        <span className="w-[7px] text-[8px] font-bold">··</span>
        <Smile size={9} className="shrink-0" />
        <Shirt size={9} fill="#2878c8" className="shrink-0" />
        <LayoutGrid size={9} fill="#2878c8" className="shrink-0" />
      </div>
      <span className="absolute left-0 flex size-[20px] items-center justify-center rounded-full bg-[#2c7fd4] text-[15px] font-bold text-white">Q</span>
    </div>
  );
}

function Taskbar() {
  return (
    <footer className="flex h-[23px] shrink-0 items-center bg-linear-to-r from-[#2a303a] via-[#26384c] via-35% to-[#303133] text-white">
      <span className="ml-[9px] grid size-[10px] grid-cols-2 gap-[1px]">
        <i className="bg-white" />
        <i className="bg-white" />
        <i className="bg-white" />
        <i className="bg-white" />
      </span>
      <Search size={10} className="ml-[18px] -scale-x-100" />
      <span className="ml-[18px] size-[9px] rounded-full border-[1.5px] border-[#e8e8e8]" />
      <span className="ml-[14px] h-[8px] w-[2px] bg-[#454c56]" />
      <span className="ml-[15px] flex size-[14px] items-center justify-center rounded-full bg-[conic-gradient(#e83090,#f04030,#f8c020,#50c040,#20a8d8,#6050c0,#e83090)]">
        <i className="size-[4px] rounded-full bg-white" />
      </span>
      <svg width="14" height="12" viewBox="0 0 14 12" className="ml-[14px]">
        <path d="M0 1h5l1 1h7v9H0z" fill="#e8c860" />
        <path d="M2 5h10v6H2z" fill="#58a8d0" />
        <path d="M0 3h13v3H0z" fill="#f4e0a0" />
        <path d="M5 8h4v3H5z" fill="#f4e0a0" />
      </svg>
      <span className="ml-[8px] flex h-full w-[28px] items-center justify-center border-b-2 border-[#70a8d8] bg-[#57606a]">
        <Emblem className="size-[13px]" />
      </span>
      <span className="ml-[3px] flex h-full w-[24px] items-center justify-center border-b-2 border-[#70a8d8]">
        <svg width="11" height="13" viewBox="0 0 12 13">
          <path d="M2 7h8.5C10.5 1 3.5 1 2.2 6.5C1 14 9 13.5 10 10.8" fill="none" stroke="#2088dc" strokeWidth="2.6" />
        </svg>
      </span>
      <span className="flex-1" />
      <ChevronUp size={9} className="mr-[10px]" />
      <BatteryCharging size={11} fill="#e0e0e0" className="mr-[10px]" />
      <Wifi size={8} className="mr-[8px] -rotate-45" />
      <span className="mr-[8px] w-[6px] text-[8px]">A</span>
      <span className="mr-[10px] flex size-[9px] items-center justify-center bg-[#2c88d8] text-[8px] font-bold">Q</span>
      <span className="mr-[10px] w-[36px] text-center text-[7.3px] leading-[11px] whitespace-nowrap">
        14:46
        <br />
        2020/6/19
      </span>
      <MessageSquare size={10} className="mr-[14px]" />
    </footer>
  );
}

export default function App() {
  return (
    <div className="relative flex h-[449px] w-[800px] flex-col overflow-hidden bg-[#fdfbfc] font-['Liberation_Sans','Noto_Sans_CJK_SC',sans-serif] leading-none">
      <MenuBar />
      <main className="flex h-[398px] shrink-0">
        <div className="flex h-[383px] bg-[#070606]">
          <ChartPanel />
          <QuotePanel />
        </div>
        <ToolStrip />
      </main>
      <IndexBar />
      <Taskbar />
      <ImeBar />
    </div>
  );
}
